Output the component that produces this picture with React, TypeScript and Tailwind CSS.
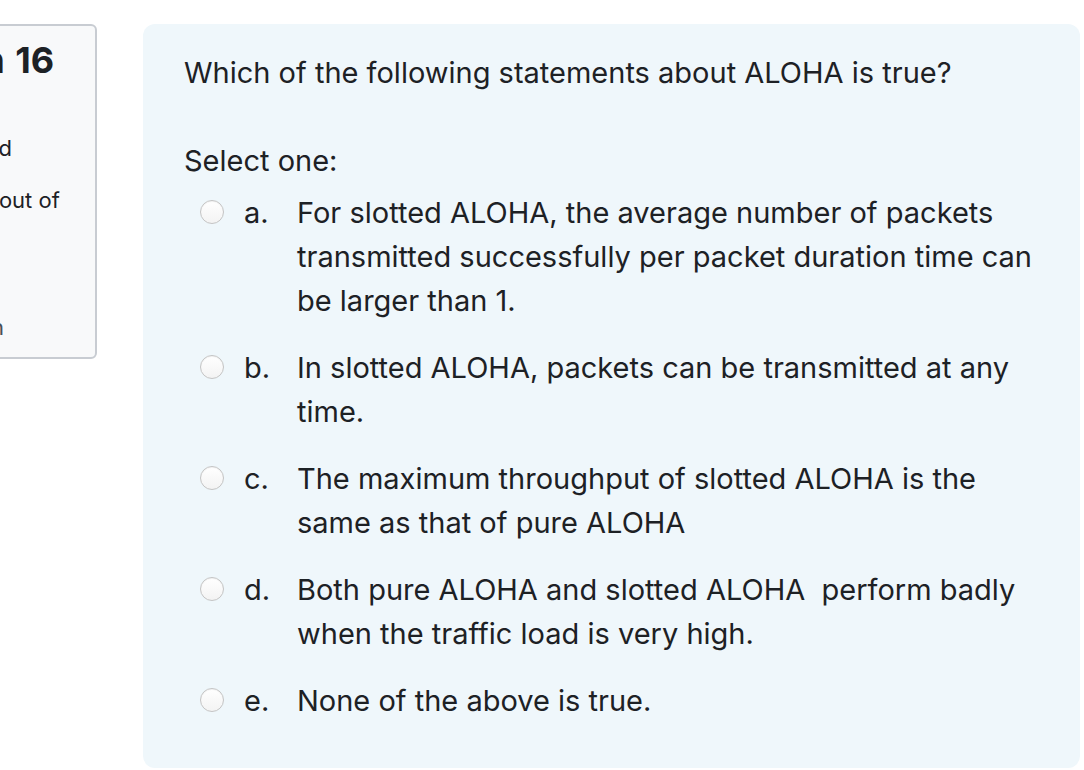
const options = [
  { letter: 'a.', text: 'For slotted ALOHA, the average number of packets transmitted successfully per packet duration time can be larger than 1.' },
  { letter: 'b.', text: 'In slotted ALOHA, packets can be transmitted at any time.' },
  { letter: 'c.', text: 'The maximum throughput of slotted ALOHA is the same as that of pure ALOHA' },
  { letter: 'd.', text: 'Both pure ALOHA and slotted ALOHA\u00a0 perform badly when the traffic load is very high.' },
  { letter: 'e.', text: 'None of the above is true.' },
]

function Radio() {
  return (
    <span className="mt-[9px] block h-[24px] w-[24px] shrink-0 rounded-full border border-[#c4c4c4] bg-gradient-to-b from-white to-[#f3f3f3] shadow-[inset_0_1px_1px_rgba(0,0,0,0.05)]" />
  )
}

export default function App() {
  return (
    <div
      className="flex h-[770px] w-[1084px] items-start overflow-hidden bg-white text-[#1d2125]"
      style={{ fontFamily: 'Inter, "Noto Sans", sans-serif' }}
    >
      {/* info panel, mostly off screen */}
      <div className="ml-[-160px] mt-[24px] h-[335px] w-[257px] shrink-0 rounded-md border-2 border-[#c8ccd2] bg-[#f8f9fa] pt-[8px]">
        <h3 className="ml-[11px] whitespace-nowrap text-[36px] leading-[52px]">
          Question <span className="font-bold">16</span>
        </h3>
        <div className="ml-[-13px] mt-[45px] whitespace-nowrap text-[22px] leading-[34px]">Not yet answered</div>
        <div className="ml-[72px] mt-[18px] text-[22px] leading-[34px]">
          <div className="whitespace-nowrap">Marked out of</div>
          <div>1.00</div>
        </div>
        <div className="ml-[22px] mt-[59px] whitespace-nowrap text-[22px] leading-[34px] text-[#495057]">Flag question</div>
      </div>

      {/* question */}
      <div className="ml-[46px] mt-[24px] w-[937px] shrink-0 rounded-xl bg-[#eff7fb] pb-[45px] pl-[41px] pr-[40px] pt-[27px] text-[29px] leading-[44px]">
        <p>Which of the following statements about ALOHA is true?</p>
        <p className="mt-[44px]">Select one:</p>
        <div className="mt-[8px] flex flex-col gap-[23px]">
          {options.map(o => (
            <div key={o.letter} className="flex pl-[16px]">
              <Radio />
              <span className="ml-[20px] w-[53px] shrink-0">{o.letter}</span>
              <span>{o.text}</span>
            </div>
          ))}
        </div>
      </div>
    </div>
  )
}
